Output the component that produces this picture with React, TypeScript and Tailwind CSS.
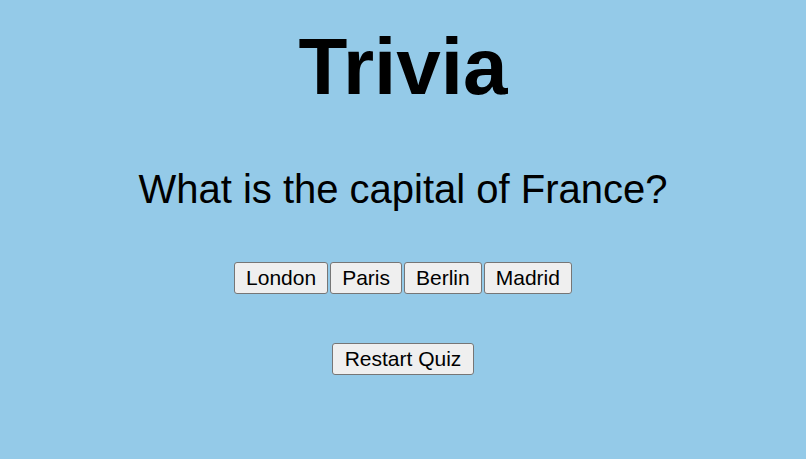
import React from "react";

const answers = ["London", "Paris", "Berlin", "Madrid"];

const btn =
  "bg-[#efefef] border border-[#767676] rounded-[3px] py-[3px] text-[21px] leading-[normal] text-black";

export default function App() {
  return (
    <div
      className="min-h-[459px] w-full bg-[#94cae8] flex flex-col items-center text-black"
      style={{ fontFamily: '"Liberation Sans", Arial, Helvetica, sans-serif' }}
    >
      <h1 className="mt-[21px] text-[80px] font-bold leading-[normal]">Trivia</h1>
      <h2 className="mt-[54px] text-[40px] font-normal leading-[normal]">
        What is the capital of France?
      </h2>
      <div className="mt-[50px] flex gap-[2px]">
        {answers.map((a) => (
          <button key={a} className={`${btn} px-[11px]`}>
            {a}
          </button>
        ))}
      </div>
      <button className={`${btn} px-[12px] mt-[49px]`}>Restart Quiz</button>
    </div>
  );
}
